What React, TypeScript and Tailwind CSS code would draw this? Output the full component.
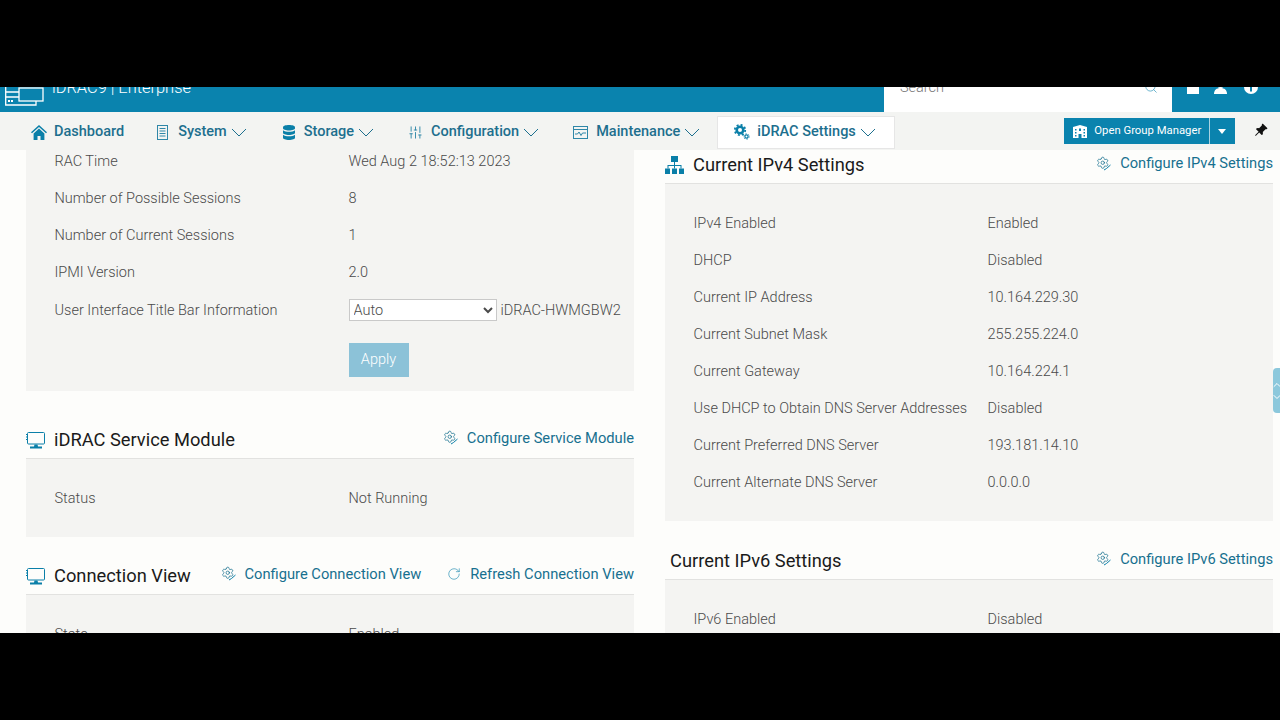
import { ChevronDown, ChevronUp, RotateCw, Search, Settings, SlidersVertical } from "lucide-react";
import { BsPinAngleFill } from "react-icons/bs";

const Chevron = () => (
    <svg width="16" height="9" viewBox="0 0 16 9" fill="none" stroke="currentColor" strokeWidth="1" className="shrink-0">
        <path d="M1 1l7 7 7-7" />
    </svg>
);

const HomeIcon = () => (
    <svg width="16" height="15" viewBox="0 0 16 15" fill="#0a7fa8">
        <path d="M8 0L0 7.2l1 1.1L8 2l7 6.3 1-1.1z" />
        <path d="M8 3.6L2.6 8.4V15h3.9v-4h3v4h3.9V8.4z" />
    </svg>
);

const ServerIcon = () => (
    <svg width="11" height="15" viewBox="0 0 11 15" fill="none" stroke="#2f87a8" strokeWidth="1">
        <rect x="0.5" y="0.5" width="10" height="14" />
        <path d="M2.5 3.5h6M2.5 6h6M2.5 8.5h6M2.5 11h6" />
    </svg>
);

const StorageIcon = () => (
    <svg width="12" height="15" viewBox="0 0 12 15" fill="#0a7fa8">
        <path d="M6 0C2.7 0 0 .9 0 2.2v1C0 4.5 2.7 5.4 6 5.4s6-.9 6-2.2v-1C12 .9 9.3 0 6 0z" />
        <path d="M0 5.2v2.6C0 9.100 2.700 10 6 10s6-.9 6-2.200V5.200C10.700 6.300 8.500 6.700 6 6.700S1.300 6.300 0 5.200z" />
        <path d="M0 9.800v3C0 14.100 2.700 15 6 15s6-.9 6-2.200v-3C10.700 10.900 8.500 11.300 6 11.300S1.300 10.900 0 9.800z" />
    </svg>
);

const MaintIcon = () => (
    <svg width="15" height="13" viewBox="0 0 15 13" fill="none" stroke="#2f87a8" strokeWidth="1">
        <rect x="0.5" y="0.500" width="14" height="12" />
        <path d="M0.500 3.500h14M2 8h2.500l1.500-2 2 3.500L9.500 7H13" />
    </svg>
);

const CogsIcon = () => (
    <svg width="16" height="16" viewBox="0 0 16 16" fill="none" stroke="#0a7fa8">
        <circle cx="6" cy="6" r="3.300" strokeWidth="2.600" />
        <circle cx="6" cy="6" r="5.200" strokeWidth="1.800" strokeDasharray="2 2.080" />
        <circle cx="12.500" cy="12.500" r="1.600" strokeWidth="1.200" />
        <circle cx="12.500" cy="12.500" r="2.700" strokeWidth="1" strokeDasharray="1.200 1.630" />
    </svg>
);

const MonitorIcon = () => (
    <svg width="20" height="17" viewBox="0 0 20 17" fill="none" stroke="#0a7fa8" className="shrink-0">
        <rect x="1.500" y="0.500" width="17" height="11.500" rx="1" strokeWidth="1" />
        <path d="M0.500 2v1M0.500 4.500v1M0.500 7v1" strokeWidth="1" />
        <path d="M8.500 12.500h3l.5 2h4v2H4v-2h4z" fill="#0a7fa8" stroke="none" />
    </svg>
);

const NetworkIcon = () => (
    <svg width="19" height="18" viewBox="0 0 19 18" fill="#0a7fa8" className="mr-[1px] shrink-0">
        <rect x="6" y="0" width="7" height="6" />
        <rect x="0" y="12.500" width="5" height="5.500" />
        <rect x="7" y="12.500" width="5" height="5.500" />
        <rect x="14" y="12.500" width="5" height="5.500" />
        <path d="M9 6h1v3h6.500v3.500h-1V10h-5.500v2.500H9V10H3.500v2.500h-1V9H9z" />
    </svg>
);

const GroupIcon = () => (
    <svg width="14" height="13" viewBox="0 0 14 13" fill="white">
        <path d="M7 0l7 2v11H8.500V9h-3v4H0V2zM2 4v1.500h1.500V4zm0 3v1.500h1.500V7zm0 3v1.500h1.500V10zM10.500 4v1.500H12V4zm0 3v1.500H12V7zm0 3v1.500H12V10zM6 3.500V6h2V3.500z" fillRule="evenodd" />
    </svg>
);

const LogoIcon = () => (
    <svg width="40" height="24" viewBox="0 0 40 24" fill="none" stroke="white" strokeWidth="1.300" className="shrink-0">
        <path d="M0.700 0v23h30.300v-4M0.700 10h13.300M0.700 15h13.300" />
        <rect x="14" y="6" width="24" height="13" />
        <path d="M3 19h2M6 19h2" strokeWidth="1.800" />
    </svg>
);

const ConfigIcon = () => (
    <svg width="15" height="15" viewBox="0 0 15 15" fill="none" stroke="#0a7fa8" strokeWidth="1" className="shrink-0">
        <Settings x={0} y={0} width={13.500} height={13.500} strokeWidth={1.300} />
        <path d="M8 14l2.500-1.500L14.500 9" />
    </svg>
);

const nav = [
    { label: "System", icon: <ServerIcon />, spacing: "ml-[33px]", slot: "w-[17px]" },
    { label: "Storage", icon: <StorageIcon />, spacing: "ml-[36px]", slot: "w-[17px]" },
    { label: "Configuration", icon: <SlidersVertical size={15} strokeWidth={1.500} className="text-[#2f87a8]" />, spacing: "ml-[34px]", slot: "w-[19px]" },
    { label: "Maintenance", icon: <MaintIcon />, spacing: "ml-[34px]", slot: "w-[19px]" },
];

const ipv4 = [
    ["IPv4 Enabled", "Enabled"],
    ["DHCP", "Disabled"],
    ["Current IP Address", "10.164.229.30"],
    ["Current Subnet Mask", "255.255.224.0"],
    ["Current Gateway", "10.164.224.1"],
    ["Use DHCP to Obtain DNS Server Addresses", "Disabled"],
    ["Current Preferred DNS Server", "193.181.14.10"],
    ["Current Alternate DNS Server", "0.0.0.0"],
];

const Row = ({ label, value }: { label: string; value: string }) => (
    <div className="flex h-[37px] items-center">
        <div className="w-[294px] shrink-0">{label}</div>
        <div>{value}</div>
    </div>
);

const ActionLink = ({ label, refresh }: { label: string; refresh?: boolean }) => (
    <a className="flex items-center gap-[9px] text-[14.700px] font-normal text-[#17708f]">
        {refresh ? <RotateCw size={14} strokeWidth={1} className="text-[#0a7fa8]" /> : <ConfigIcon />}
        <span>{label}</span>
    </a>
);

const Heading = ({ children }: { children: React.ReactNode }) => (
    <div className="flex h-[24px] items-center gap-[8px] text-[18.300px] leading-[24px] font-normal text-[#1a1a1a]">{children}</div>
);

export default function App() {
    return (
        <div className="h-[720px] w-[1280px] overflow-hidden bg-black font-['Roboto',sans-serif] text-[14.500px] font-light text-[#4a4a4a]">
            <div className="h-[87px]" />
            <div className="flex h-[546px] flex-col overflow-hidden bg-[#fdfdfb]">
                <div className="flex h-[25px] shrink-0 items-end overflow-hidden bg-[#0a83ae]">
                    <div className="mb-[6px] ml-[5px]">
                        <LogoIcon />
                    </div>
                    <div className="mb-[12px] ml-[7px] w-[832px] shrink-0 text-[16.400px] leading-[24px] text-white">iDRAC9 | Enterprise</div>
                    <div className="flex h-[25px] w-[288px] shrink-0 items-end justify-between bg-white pl-[16px] pr-[14px] text-[#777]">
                        <span className="mb-[14px] leading-[20px]">Search</span>
                        <Search size={14} strokeWidth={1} className="mb-[18px] text-[#0a83ae]" />
                    </div>
                    <div className="mb-[18px] ml-[15px] flex items-end text-white">
                        <div className="h-[13px] w-[12px] bg-white" />
                        <svg width="13" height="13" viewBox="0 0 13 13" fill="white" className="ml-[15px]">
                            <circle cx="6.500" cy="3.500" r="3.500" />
                            <path d="M0 13c0-4 2.500-6 6.500-6s6.500 2 6.500 6z" />
                        </svg>
                        <svg width="14" height="14" viewBox="0 0 14 14" className="ml-[17px]">
                            <circle cx="7" cy="7" r="7" fill="white" />
                            <rect x="6" y="6" width="2" height="5.500" fill="#0a83ae" />
                        </svg>
                    </div>
                </div>

                <div className="flex h-[38px] shrink-0 items-center bg-[#f3f4f2] pt-[2px] text-[14.500px] font-medium text-[#1d6f8e]">
                    <div className="ml-[31px] flex items-center gap-[7px]">
                        <HomeIcon />
                        <span>Dashboard</span>
                    </div>
                    {nav.map((n) => (
                        <div key={n.label} className={`flex shrink-0 items-center gap-[4px] ${n.spacing}`}>
                            <span className={`flex shrink-0 ${n.slot}`}>{n.icon}</span>
                            <span>{n.label}</span>
                            <Chevron />
                        </div>
                    ))}
                    <div className="ml-[17px] flex h-[33px] w-[178px] shrink-0 items-center gap-[4px] border border-[#e6e6e6] bg-white pl-[16px]">
                        <span className="flex w-[19px] shrink-0"><CogsIcon /></span>
                        <span>iDRAC Settings</span>
                        <Chevron />
                    </div>
                    <div className="-mt-[2px] ml-[169px] flex h-[26px] w-[171px] shrink-0 items-center bg-[#0a83ae] text-[11.300px] font-normal text-white">
                        <div className="flex h-full w-[146px] items-center gap-[7px] border-r border-[#a9d3e2] pl-[9px]">
                            <GroupIcon />
                            <span>Open Group Manager</span>
                        </div>
                        <svg width="8" height="5" viewBox="0 0 8 5" fill="white" className="ml-[8px]">
                            <path d="M0 0h8L4 5z" />
                        </svg>
                    </div>
                    <BsPinAngleFill size={14} className="-mt-[4px] ml-[19px] text-[#111]" />
                </div>

                <div className="flex min-h-0 flex-1 gap-[31px] pl-[26px] pr-[7px]">
                    <div className="w-[608px] shrink-0">
                        <div className="h-[241px] bg-[#f4f4f2] pl-[28.500px]">
                            <div className="flex h-[30px] items-start pt-[1px]">
                                <div className="w-[294px] shrink-0">RAC Time</div>
                                <div>Wed Aug 2 18:52:13 2023</div>
                            </div>
                            <Row label="Number of Possible Sessions" value="8" />
                            <Row label="Number of Current Sessions" value="1" />
                            <Row label="IPMI Version" value="2.0" />
                            <div className="flex h-[38px] items-center">
                                <div className="w-[294px] shrink-0 pt-[1px]">User Interface Title Bar Information</div>
                                <select defaultValue="Auto" className="h-[22px] w-[148px] border border-[#c9c9c9] bg-white">
                                    <option>Auto</option>
                                </select>
                                <div className="ml-[4px] pt-[1px]">iDRAC-HWMGBW2</div>
                            </div>
                            <div className="ml-[294px] mt-[14px] flex h-[34px] w-[60px] items-center justify-center bg-[#8cc2d8] text-white">Apply</div>
                        </div>

                        <div className="flex h-[68px] items-end justify-between border-b border-[#e2e2e0] pb-[6px]">
                            <Heading>
                                <MonitorIcon />
                                <span>iDRAC Service Module</span>
                            </Heading>
                            <div className="mb-[3px]"><ActionLink label="Configure Service Module" /></div>
                        </div>
                        <div className="h-[78px] bg-[#f4f4f2] pl-[28.500px] pt-[21px]">
                            <Row label="Status" value="Not Running" />
                        </div>

                        <div className="flex h-[58px] items-end justify-between border-b border-[#e2e2e0] pb-[6px]">
                            <Heading>
                                <MonitorIcon />
                                <span>Connection View</span>
                            </Heading>
                            <div className="mb-[3px] flex gap-[26px]">
                                <ActionLink label="Configure Connection View" />
                                <ActionLink label="Refresh Connection View" refresh />
                            </div>
                        </div>
                        <div className="h-[60px] bg-[#f4f4f2] pl-[28.500px] pt-[21px]">
                            <Row label="State" value="Enabled" />
                        </div>
                    </div>

                    <div className="relative w-[608px] shrink-0">
                        <div className="flex h-[34px] items-start justify-between border-b border-[#e2e2e0] pt-[2px]">
                            <div className="mt-[1px]">
                                <Heading>
                                    <NetworkIcon />
                                    <span>Current IPv4 Settings</span>
                                </Heading>
                            </div>
                            <ActionLink label="Configure IPv4 Settings" />
                        </div>
                        <div className="h-[337px] bg-[#f4f4f2] pl-[28.500px] pt-[21px]">
                            {ipv4.map(([k, v]) => (
                                <Row key={k} label={k} value={v} />
                            ))}
                        </div>
                        <div className="flex h-[59px] items-end justify-between border-b border-[#e2e2e0] pb-[6px] pl-[5px]">
                            <Heading>Current IPv6 Settings</Heading>
                            <div className="mb-[3px]"><ActionLink label="Configure IPv6 Settings" /></div>
                        </div>
                        <div className="h-[60px] bg-[#f4f4f2] pl-[28.500px] pt-[21px]">
                            <Row label="IPv6 Enabled" value="Disabled" />
                        </div>
                        <div className="absolute -right-[7px] top-[218px] flex h-[45px] w-[7px] flex-col items-center justify-center overflow-hidden rounded-l-[4px] bg-[#8cc8dc] text-white">
                            <ChevronUp size={12} />
                            <ChevronDown size={12} />
                        </div>
                    </div>
                </div>
            </div>
        </div>
    );
}
